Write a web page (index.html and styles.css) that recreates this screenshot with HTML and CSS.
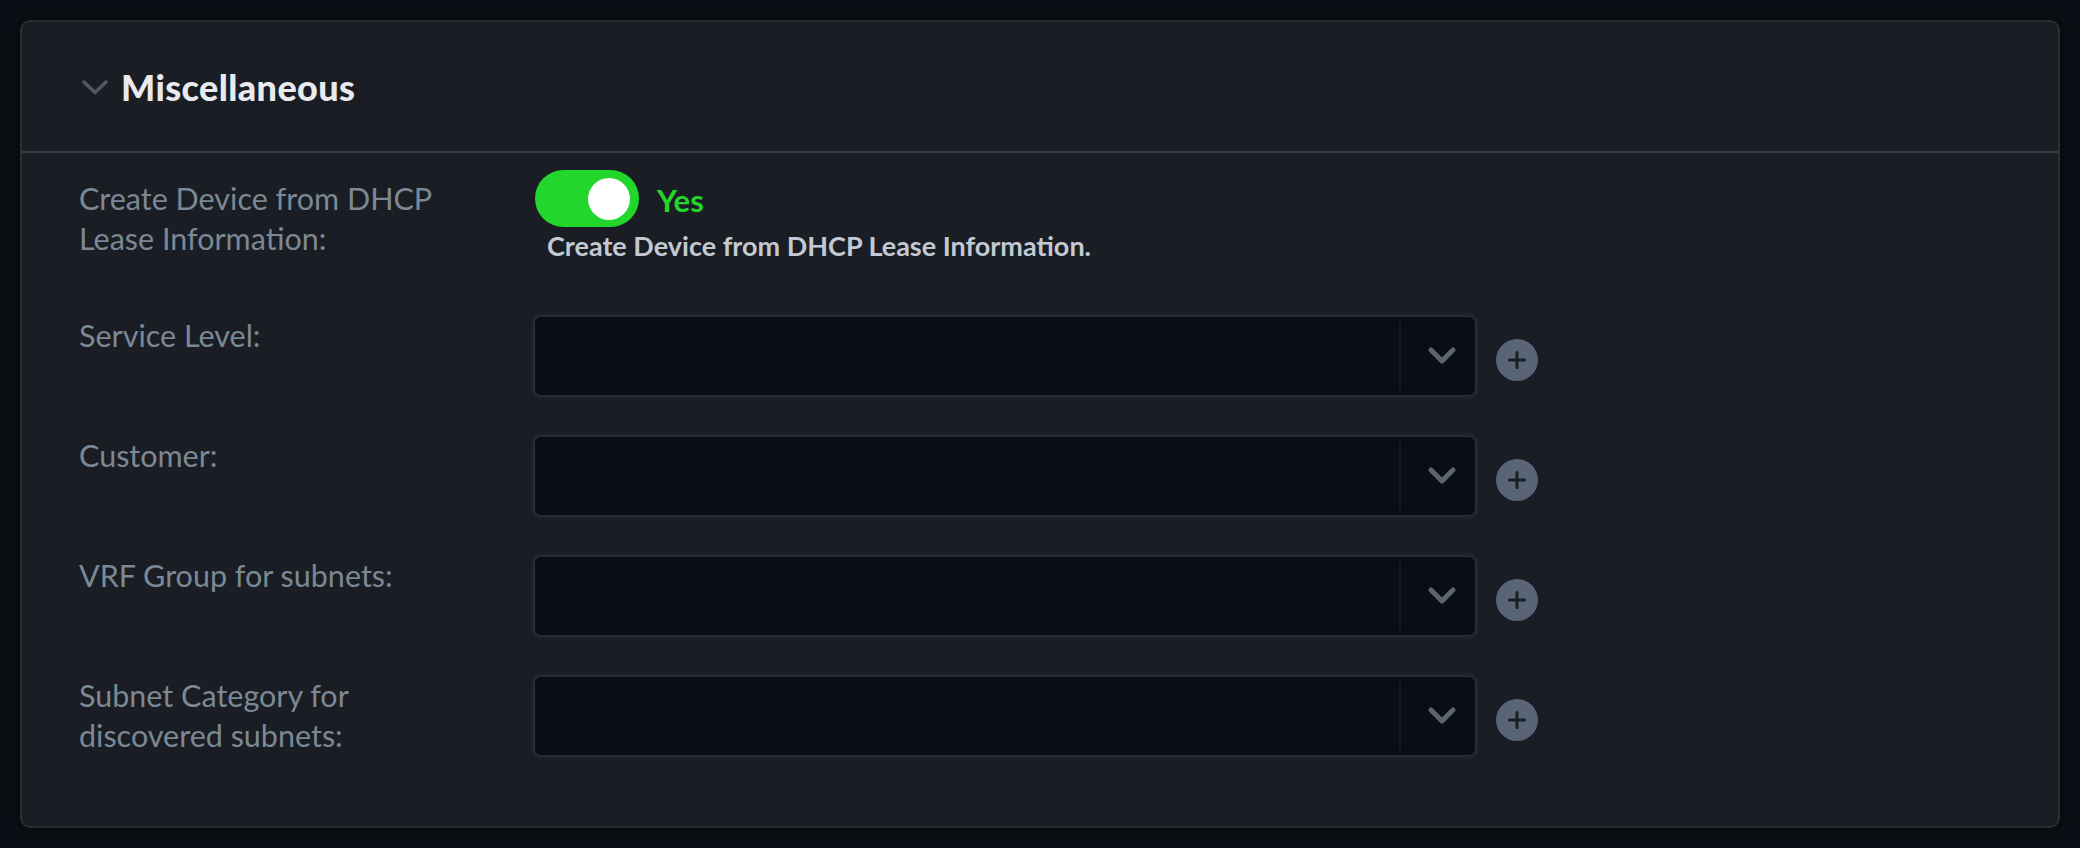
FILE: index.html
```html
<!DOCTYPE html>
<html lang="en">
<head>
<meta charset="utf-8">
<title>Miscellaneous</title>
<link rel="stylesheet" href="styles.css">
</head>
<body>
<section class="card">
  <header class="card-header">
    <svg class="caret" width="26" height="15" viewBox="0 0 26 15"><polyline points="2,2 13,12.5 24,2" fill="none" stroke="#4f5966" stroke-width="3.5" stroke-linecap="round" stroke-linejoin="round"/></svg>
    <h2 class="title">Miscellaneous</h2>
  </header>
  <div class="card-body">
    <div class="row row-toggle">
      <label class="label">Create Device from DHCP<br>Lease Information:</label>
      <div class="control">
        <div class="toggle-line">
          <span class="toggle"><span class="knob"></span></span>
          <span class="yes">Yes</span>
        </div>
        <div class="help">Create Device from DHCP Lease Information.</div>
      </div>
    </div>

    <div class="row">
      <label class="label">Service Level:</label>
      <div class="control select-line">
        <div class="select"><div class="select-value"></div><div class="select-arrow"><svg width="30" height="20" viewBox="0 0 30 20"><polyline points="4,4 15,15 26,4" fill="none" stroke="#5b6572" stroke-width="5" stroke-linecap="round" stroke-linejoin="round"/></svg></div></div>
        <span class="add"><svg width="18" height="18" viewBox="0 0 18 18"><path d="M9 1.5v15M1.5 9h15" stroke="#1a1d24" stroke-width="3" stroke-linecap="round"/></svg></span>
      </div>
    </div>

    <div class="row">
      <label class="label">Customer:</label>
      <div class="control select-line">
        <div class="select"><div class="select-value"></div><div class="select-arrow"><svg width="30" height="20" viewBox="0 0 30 20"><polyline points="4,4 15,15 26,4" fill="none" stroke="#5b6572" stroke-width="5" stroke-linecap="round" stroke-linejoin="round"/></svg></div></div>
        <span class="add"><svg width="18" height="18" viewBox="0 0 18 18"><path d="M9 1.5v15M1.5 9h15" stroke="#1a1d24" stroke-width="3" stroke-linecap="round"/></svg></span>
      </div>
    </div>

    <div class="row">
      <label class="label">VRF Group for subnets:</label>
      <div class="control select-line">
        <div class="select"><div class="select-value"></div><div class="select-arrow"><svg width="30" height="20" viewBox="0 0 30 20"><polyline points="4,4 15,15 26,4" fill="none" stroke="#5b6572" stroke-width="5" stroke-linecap="round" stroke-linejoin="round"/></svg></div></div>
        <span class="add"><svg width="18" height="18" viewBox="0 0 18 18"><path d="M9 1.5v15M1.5 9h15" stroke="#1a1d24" stroke-width="3" stroke-linecap="round"/></svg></span>
      </div>
    </div>

    <div class="row">
      <label class="label">Subnet Category for<br>discovered subnets:</label>
      <div class="control select-line">
        <div class="select"><div class="select-value"></div><div class="select-arrow"><svg width="30" height="20" viewBox="0 0 30 20"><polyline points="4,4 15,15 26,4" fill="none" stroke="#5b6572" stroke-width="5" stroke-linecap="round" stroke-linejoin="round"/></svg></div></div>
        <span class="add"><svg width="18" height="18" viewBox="0 0 18 18"><path d="M9 1.5v15M1.5 9h15" stroke="#1a1d24" stroke-width="3" stroke-linecap="round"/></svg></span>
      </div>
    </div>
  </div>
</section>
</body>
</html>
```

FILE: styles.css
```css
* { box-sizing: border-box; }

html, body {
  margin: 0;
  background: #0b0e14;
}

body {
  padding: 20px;
  font-family: "Lato", "Noto Sans", sans-serif;
}

.card {
  height: 808px;
  background: #1a1d24;
  border: 2px solid #2a2d33;
  border-radius: 10px;
  box-shadow: 0 0 10px rgba(0, 0, 0, 0.6);
}

.card-header {
  height: 131px;
  display: flex;
  align-items: center;
  gap: 13px;
  padding-left: 60px;
  border-bottom: 2px solid #383b41;
}

.caret {
  margin-top: 2px;
}

.title {
  margin: 0;
  font-family: "Lato", sans-serif;
  font-weight: 900;
  font-size: 36px;
  color: #e9eaee;
  letter-spacing: 0.4px;
}

.card-body {
  padding: 17px 0 0 57px;
  display: flex;
  flex-direction: column;
  gap: 42px;
}

.row {
  display: grid;
  grid-template-columns: 456px 1fr;
  align-items: start;
}

.row-toggle {
  margin-bottom: 14px;
}

.label {
  font-size: 30.5px;
  line-height: 40px;
  color: #7b8895;
  margin-top: -2px;
}

.row-toggle .label {
  margin-top: 8px;
}

.toggle-line {
  display: flex;
  align-items: center;
  gap: 18px;
  height: 57px;
}

.toggle {
  width: 104px;
  height: 57px;
  border-radius: 29px;
  background: #23d62b;
  display: flex;
  align-items: center;
  justify-content: flex-end;
  padding-right: 9px;
}

.knob {
  width: 42px;
  height: 42px;
  border-radius: 50%;
  background: #ffffff;
}

.yes {
  font-size: 31px;
  font-weight: 700;
  color: #23d62b;
  margin-top: 2px;
}

.help {
  padding-left: 12px;
  margin-top: 4px;
  font-size: 27px;
  font-weight: 700;
  line-height: 30px;
  color: #c2c9d2;
}

.select-line {
  display: flex;
  align-items: center;
  gap: 21px;
}

.select {
  width: 940px;
  height: 78px;
  background: #0a0d13;
  border-radius: 6px;
  box-shadow: 0 0 5px rgba(190, 195, 205, 0.28);
  display: flex;
  align-items: stretch;
  padding: 5px 0;
}

.select-value {
  flex: 1;
}

.select-arrow {
  width: 76px;
  border-left: 2px solid #171a21;
  display: flex;
  align-items: center;
  justify-content: center;
  padding-left: 8px;
}

.add {
  width: 42px;
  height: 42px;
  border-radius: 50%;
  background: #596474;
  display: flex;
  align-items: center;
  justify-content: center;
  margin-top: 7px;
}
```
